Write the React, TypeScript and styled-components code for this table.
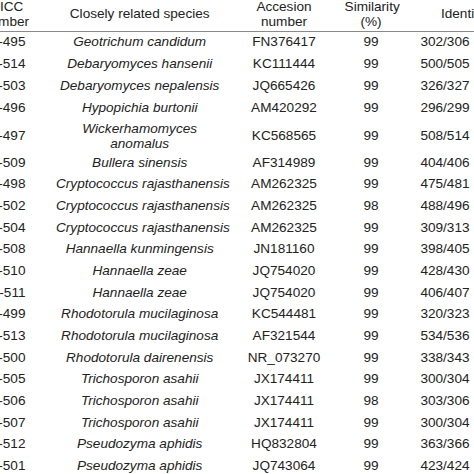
import React from "react";
import styled, { createGlobalStyle } from "styled-components";

const Global = createGlobalStyle`
  html, body {
    margin: 0;
    padding: 0;
    background: #ffffff;
    overflow: hidden;
  }
  body {
    font-family: "Liberation Sans", Arial, Helvetica, sans-serif;
    color: #222222;
  }
`;

const COLS = "96px 167.4px 121.2px 52.8px 95.2px";

const Table = styled.div`
  width: 532.6px;
  margin-left: -40px;
  font-size: 13.6px;
  line-height: 14.7px;
  color: #222222;
`;

const HeaderRow = styled.div`
  display: grid;
  grid-template-columns: ${COLS};
  padding-bottom: 4px;
  box-sizing: content-box;
  height: 27px;
  border-bottom: 1px solid #8a8a8a;
  align-items: center;
`;

const HeaderCell = styled.div<{ $left?: number; $shift?: number }>`
  text-align: ${(p) => (p.$left !== undefined ? "left" : "center")};
  padding-left: ${(p) => (p.$left !== undefined ? `${p.$left}px` : "0")};
  padding-right: ${(p) => (p.$shift ? `${p.$shift}px` : "0")};
  white-space: nowrap;
`;

const Row = styled.div<{ $tall?: boolean }>`
  display: grid;
  grid-template-columns: ${COLS};
  height: ${(p) => (p.$tall ? "33.3px" : "21.7px")};
  padding-top: ${(p) => (p.$tall ? "2.5px" : "0")};
  box-sizing: border-box;
  align-items: center;
`;

const CodeCell = styled.div`
  text-align: right;
  padding-right: 30.5px;
  white-space: nowrap;
`;

const SpeciesCell = styled.div`
  text-align: center;
  font-style: italic;
  white-space: nowrap;
`;

const Cell = styled.div`
  text-align: center;
  white-space: nowrap;
`;

type Entry = {
  code: string;
  species: string[];
  acc: string;
  sim: string;
  ident: string;
  tall?: boolean;
};

const rows: Entry[] = [
  { code: "495", species: ["Geotrichum candidum"], acc: "FN376417", sim: "99", ident: "302/306" },
  { code: "514", species: ["Debaryomyces hansenii"], acc: "KC111444", sim: "99", ident: "500/505" },
  { code: "503", species: ["Debaryomyces nepalensis"], acc: "JQ665426", sim: "99", ident: "326/327" },
  { code: "496", species: ["Hypopichia burtonii"], acc: "AM420292", sim: "99", ident: "296/299" },
  { code: "497", species: ["Wickerhamomyces", "anomalus"], acc: "KC568565", sim: "99", ident: "508/514", tall: true },
  { code: "509", species: ["Bullera sinensis"], acc: "AF314989", sim: "99", ident: "404/406" },
  { code: "498", species: ["Cryptococcus rajasthanensis"], acc: "AM262325", sim: "99", ident: "475/481" },
  { code: "502", species: ["Cryptococcus rajasthanensis"], acc: "AM262325", sim: "98", ident: "488/496" },
  { code: "504", species: ["Cryptococcus rajasthanensis"], acc: "AM262325", sim: "99", ident: "309/313" },
  { code: "508", species: ["Hannaella kunmingensis"], acc: "JN181160", sim: "99", ident: "398/405" },
  { code: "510", species: ["Hannaella zeae"], acc: "JQ754020", sim: "99", ident: "428/430" },
  { code: "511", species: ["Hannaella zeae"], acc: "JQ754020", sim: "99", ident: "406/407" },
  { code: "499", species: ["Rhodotorula mucilaginosa"], acc: "KC544481", sim: "99", ident: "320/323" },
  { code: "513", species: ["Rhodotorula mucilaginosa"], acc: "AF321544", sim: "99", ident: "534/536" },
  { code: "500", species: ["Rhodotorula dairenensis"], acc: "NR_073270", sim: "99", ident: "338/343" },
  { code: "505", species: ["Trichosporon asahii"], acc: "JX174411", sim: "99", ident: "300/304" },
  { code: "506", species: ["Trichosporon asahii"], acc: "JX174411", sim: "98", ident: "303/306" },
  { code: "507", species: ["Trichosporon asahii"], acc: "JX174411", sim: "99", ident: "300/304" },
  { code: "512", species: ["Pseudozyma aphidis"], acc: "HQ832804", sim: "99", ident: "363/366" },
  { code: "501", species: ["Pseudozyma aphidis"], acc: "JQ743064", sim: "99", ident: "423/424" },
];

export default function App() {
  return (
    <>
      <Global />
      <Table>
        <HeaderRow>
          <HeaderCell $shift={4}>
            MICC
            <br />
            number
          </HeaderCell>
          <HeaderCell>Closely related species</HeaderCell>
          <HeaderCell>
            Accesion
            <br />
            number
          </HeaderCell>
          <HeaderCell>
            Similarity
            <br />
            (%)
          </HeaderCell>
          <HeaderCell $left={43.6}>Identities</HeaderCell>
        </HeaderRow>
        {rows.map((r, i) => (
          <Row key={i} $tall={r.tall}>
            <CodeCell>MICC-{r.code}</CodeCell>
            <SpeciesCell>
              {r.species.map((line, j) => (
                <React.Fragment key={j}>
                  {j > 0 && <br />}
                  {line}
                </React.Fragment>
              ))}
            </SpeciesCell>
            <Cell>{r.acc}</Cell>
            <Cell>{r.sim}</Cell>
            <Cell>{r.ident}</Cell>
          </Row>
        ))}
      </Table>
    </>
  );
}
